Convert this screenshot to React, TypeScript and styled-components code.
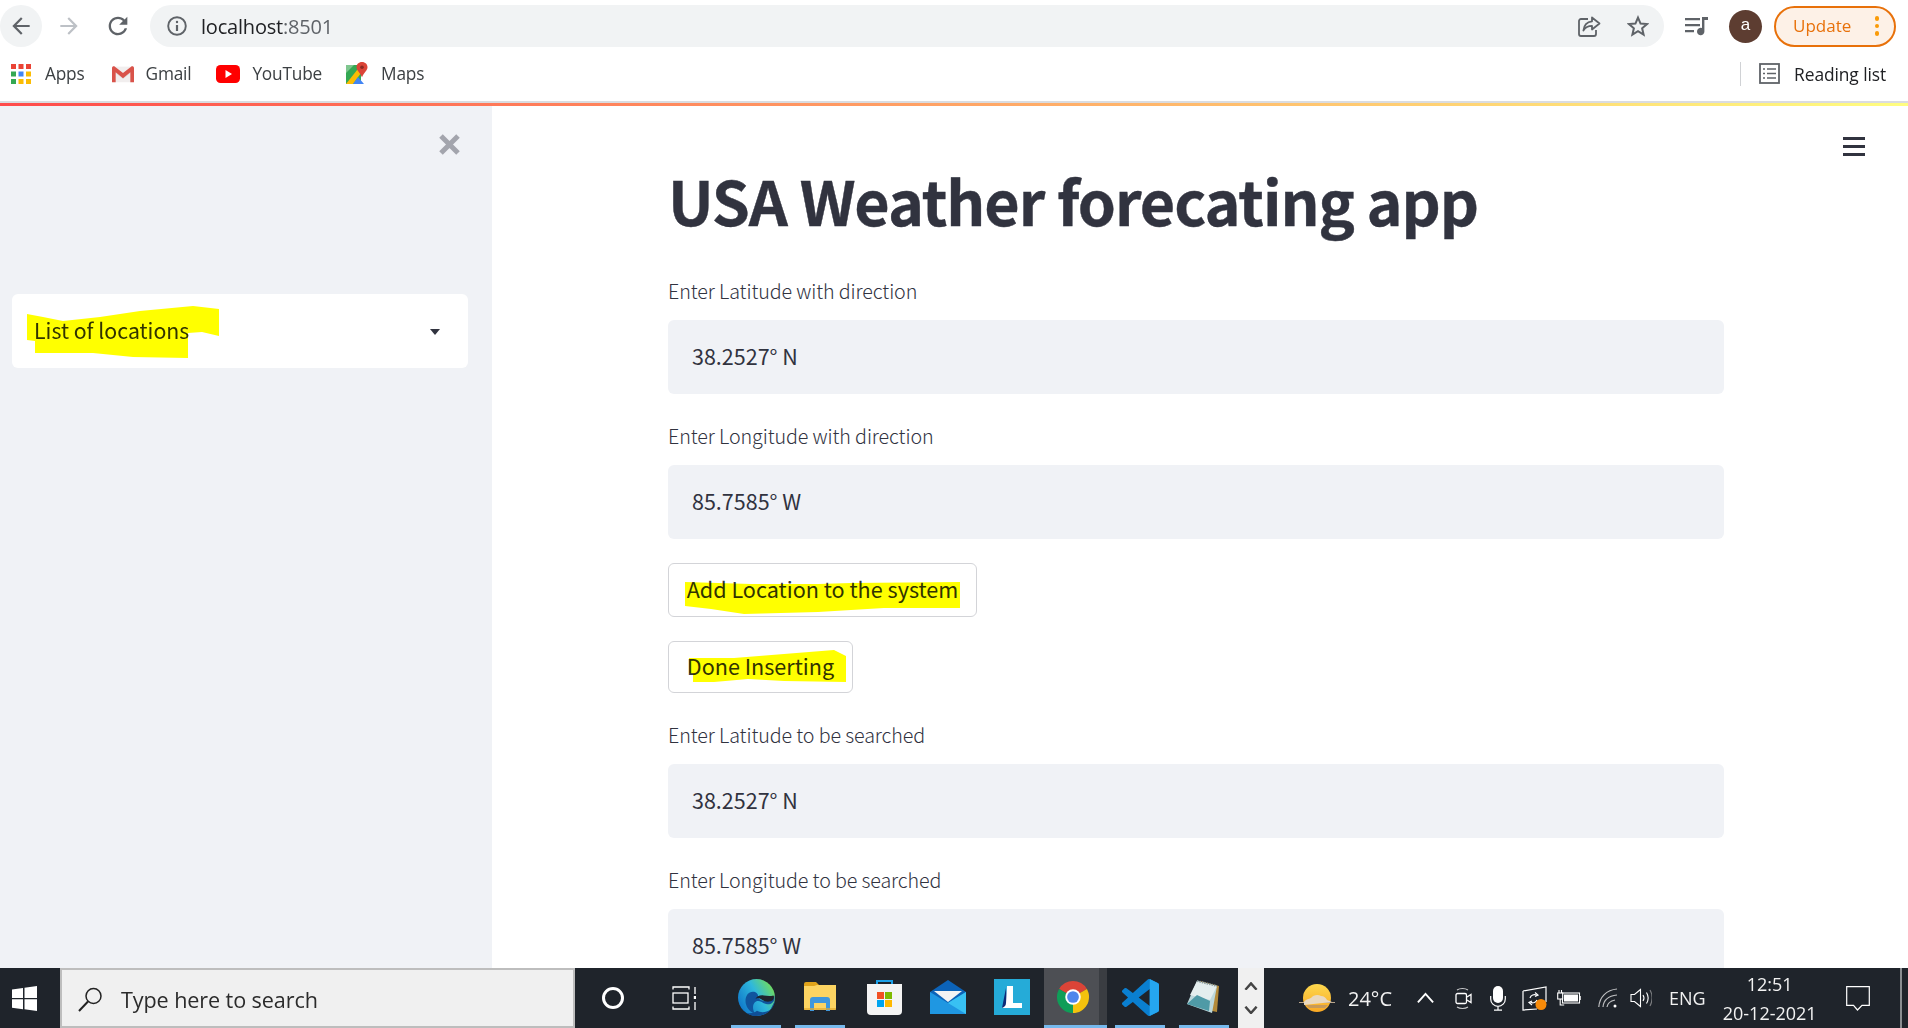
import React from 'react';
import styled, { createGlobalStyle } from 'styled-components';

const GlobalStyle = createGlobalStyle`
  html, body {
    margin: 0;
    padding: 0;
    height: 100%;
    overflow: hidden;
    background: #fff;
  }
  * {
    box-sizing: border-box;
  }
`;

const APP_FONT = `"Noto Sans CJK SC", "Source Sans Pro", "Noto Sans", sans-serif`;
const UI_FONT = `"Open Sans", "Noto Sans", sans-serif`;

const Page = styled.div`
  width: 1908px;
  height: 1028px;
  display: flex;
  flex-direction: column;
  overflow: hidden;
`;

/* browser chrome */
const Toolbar = styled.div`
  height: 52px;
  flex: none;
  display: flex;
  align-items: flex-start;
  padding-top: 5px;
  background: #fff;
`;

const NavButton = styled.div<{ $active?: boolean; $ml?: number }>`
  width: 42px;
  height: 42px;
  flex: none;
  margin-left: ${(p) => p.$ml ?? 0}px;
  display: flex;
  align-items: center;
  justify-content: center;
  border-radius: 50%;
  background: ${(p) => (p.$active ? '#f1f3f4' : 'transparent')};
`;

const AddressBar = styled.div`
  width: 1514px;
  height: 42px;
  flex: none;
  margin-left: 11px;
  padding: 0 15px 0 17px;
  display: flex;
  align-items: center;
  border-radius: 21px;
  background: #f1f3f4;
  font-family: ${UI_FONT};
  font-size: 20px;
  color: #202124;
`;

const Url = styled.span`
  margin-left: 14px;
  letter-spacing: -0.2px;
  span {
    color: #5f6368;
  }
`;

const AddressActions = styled.div`
  margin-left: auto;
  display: flex;
  align-items: center;
  gap: 26px;
`;

const ToolbarIcons = styled.div`
  display: flex;
  align-items: center;
  height: 42px;
  margin-left: 21px;
  gap: 20px;
`;

const Avatar = styled.div`
  width: 33px;
  height: 33px;
  border-radius: 50%;
  background: #5d3d31;
  color: #fff;
  font-family: "Liberation Sans", sans-serif;
  font-size: 17px;
  display: flex;
  align-items: center;
  justify-content: center;
  padding-bottom: 2px;
`;

const UpdatePill = styled.div`
  width: 122px;
  height: 41px;
  margin-left: -8px;
  padding: 0 15px 2px 17px;
  border: 2px solid #e8710a;
  border-radius: 21px;
  background: #fdf1e7;
  color: #e8710a;
  font-family: ${UI_FONT};
  font-size: 17px;
  display: flex;
  align-items: center;
  justify-content: space-between;
`;

const Dots = styled.div`
  display: flex;
  flex-direction: column;
  gap: 3px;
  margin-top: 2px;
  i {
    width: 4.5px;
    height: 4.5px;
    border-radius: 50%;
    background: #fa9b08;
  }
`;

const BookmarkBar = styled.div`
  height: 49px;
  flex: none;
  display: flex;
  align-items: center;
  padding: 0 22px 6px 11px;
  background: #fff;
  font-family: ${UI_FONT};
  font-size: 17.3px;
  color: #3c4043;
`;

const Bookmark = styled.div<{ $gap: number; $ml?: number }>`
  display: flex;
  align-items: center;
  gap: ${(p) => p.$gap}px;
  margin-left: ${(p) => p.$ml ?? 0}px;
  letter-spacing: -0.2px;
`;

const ReadingList = styled.div`
  margin-left: auto;
  display: flex;
  align-items: center;
  gap: 14px;
  height: 24px;
  padding-left: 18px;
  border-left: 1px solid #d0d2d5;
  font-size: 17.4px;
  letter-spacing: -0.1px;
  color: #202124;
`;

const Divider = styled.div`
  height: 2px;
  flex: none;
  background: #dadce0;
`;

const Decoration = styled.div`
  height: 3px;
  flex: none;
  background: linear-gradient(90deg, #ff4b4b, #fffd80);
`;

/* streamlit page */
const Body = styled.div`
  flex: 1;
  min-height: 0;
  display: flex;
  overflow: hidden;
  font-family: ${APP_FONT};
  color: #31333f;
`;

const Sidebar = styled.aside`
  width: 492px;
  flex: none;
  padding: 28px 12px 0;
  background: #f0f2f6;
`;

const CloseRow = styled.div`
  display: flex;
  justify-content: flex-end;
  height: 160px;
  padding-right: 20px;
`;

const SelectBox = styled.div`
  position: relative;
  width: 456px;
  height: 74px;
  padding: 0 22px 0;
  display: flex;
  align-items: center;
  justify-content: space-between;
  border-radius: 6px;
  background: #fff;
  font-size: 21.3px;
`;

const SelectText = styled.span`
  margin-bottom: 4px;
`;

const Caret = styled.div`
  width: 0;
  height: 0;
  border-left: 5.5px solid transparent;
  border-right: 5.5px solid transparent;
  border-top: 6px solid #31333f;
  margin-right: 6px;
  margin-top: 2px;
`;

const Marker = styled.svg`
  position: absolute;
  inset: 0;
  width: 100%;
  height: 100%;
  overflow: visible;
  mix-blend-mode: multiply;
  pointer-events: none;
`;

const Main = styled.main`
  position: relative;
  flex: 1;
  padding: 0 184px 0 176px;
  display: flex;
  flex-direction: column;
  align-items: flex-start;
  gap: 24px;
  background: #fff;
`;

const MenuButton = styled.div`
  position: absolute;
  top: 31px;
  right: 43px;
  width: 22px;
  height: 19px;
  border-top: 3px solid #31333f;
  border-bottom: 3px solid #31333f;
  &::after {
    content: '';
    display: block;
    height: 3px;
    margin-top: 5px;
    background: #31333f;
  }
`;

const Title = styled.h1`
  flex: none;
  margin: 0;
  height: 143px;
  padding-top: 63px;
  font-size: 61px;
  line-height: 1;
  font-weight: 700;
  letter-spacing: -1.07px;
  -webkit-text-stroke: 0.4px #31333f;
  white-space: nowrap;
`;

const Field = styled.div`
  width: 100%;
  flex: none;
`;

const Label = styled.div`
  height: 36px;
  margin-bottom: 11px;
  line-height: 36px;
  font-size: 19.7px;
  font-weight: 300;
  letter-spacing: -0.1px;
`;

const InputBox = styled.div`
  height: 74px;
  padding: 0 24px 4px;
  display: flex;
  align-items: center;
  border-radius: 6px;
  background: #f0f2f6;
  font-size: 21.5px;
`;

const Button = styled.div<{ $w: number; $h: number }>`
  position: relative;
  flex: none;
  width: ${(p) => p.$w}px;
  height: ${(p) => p.$h}px;
  padding-bottom: 3px;
  display: flex;
  align-items: center;
  justify-content: center;
  border: 1px solid #d3d4d8;
  border-radius: 6px;
  background: #fff;
  font-size: 21.6px;
  white-space: nowrap;
`;

/* windows taskbar */
const Taskbar = styled.footer`
  height: 60px;
  flex: none;
  display: flex;
  align-items: stretch;
  background: #1f242b;
  font-family: ${UI_FONT};
  color: #f2f2f2;
`;

const StartButton = styled.div`
  width: 60px;
  flex: none;
  display: flex;
  align-items: center;
  justify-content: center;
  padding-right: 12px;
`;

const SearchBox = styled.div`
  width: 515px;
  flex: none;
  padding: 2px 0 0 16px;
  display: flex;
  align-items: center;
  gap: 18px;
  background: #f0f0f0;
  border: 2px solid #bdbdbd;
  color: #2b2b2b;
  font-size: 21.6px;
  letter-spacing: -0.1px;
`;

const Cortana = styled.div`
  width: 75px;
  flex: none;
  display: flex;
  align-items: center;
  justify-content: center;
`;

const TaskView = styled.div`
  width: 74px;
  flex: none;
  padding-left: 22px;
  display: flex;
  align-items: center;
`;

const AppButton = styled.div<{ $open?: boolean; $active?: boolean }>`
  position: relative;
  width: 64px;
  flex: none;
  display: flex;
  align-items: center;
  justify-content: center;
  padding-bottom: 2px;
  background: ${(p) =>
    p.$active ? 'linear-gradient(90deg, #4d4f54 0 55px, #3a3d42 55px, #3a3d42 63px, #1f242b 63px)' : 'transparent'};
  ${(p) => p.$active && 'padding-right: 6px;'}
  &::after {
    content: '';
    display: ${(p) => (p.$open ? 'block' : 'none')};
    position: absolute;
    left: ${(p) => (p.$active ? 0 : 7)}px;
    right: ${(p) => (p.$active ? 1 : 7)}px;
    bottom: 0;
    height: 3px;
    background: #76b9ed;
  }
`;

const ScrollStrip = styled.div`
  width: 26px;
  flex: none;
  margin-left: 2px;
  display: flex;
  flex-direction: column;
  align-items: center;
  justify-content: space-around;
  padding: 6px 0;
  background: #f0f0f0;
`;

const Tray = styled.div`
  flex: 1;
  display: flex;
  align-items: center;
  padding-left: 35px;
`;

const TrayItem = styled.div<{ $ml: number; $size?: number }>`
  flex: none;
  display: flex;
  align-items: center;
  margin-left: ${(p) => p.$ml}px;
  font-size: ${(p) => p.$size ?? 19}px;
`;

const Clock = styled.div`
  width: 94px;
  margin-left: 17px;
  flex: none;
  display: flex;
  flex-direction: column;
  align-items: center;
  gap: 5px;
  font-size: 18px;
  line-height: 24px;
`;

const EdgeLine = styled.div`
  width: 2px;
  height: 100%;
  margin-left: 30px;
  background: #8a8d91;
`;

const Highlight = ({ points }: { points: string }) => (
  <Marker>
    <polygon points={points} fill="#ffff00" />
  </Marker>
);

const BackIcon = ({ color }: { color: string }) => (
  <svg width="26" height="26" viewBox="0 0 24 24" fill={color}>
    <path d="M20 11H7.83l5.59-5.59L12 4l-8 8 8 8 1.41-1.41L7.83 13H20v-2z" />
  </svg>
);

const ForwardIcon = () => (
  <svg width="26" height="26" viewBox="0 0 24 24" fill="#bdc1c6">
    <path d="M12 4l-1.41 1.41L16.17 11H4v2h12.17l-5.58 5.59L12 20l8-8z" />
  </svg>
);

const ReloadIcon = () => (
  <svg width="28" height="28" viewBox="0 0 24 24" fill="#5f6368">
    <path d="M17.65 6.35C16.2 4.9 14.21 4 12 4c-4.42 0-7.99 3.58-7.99 8s3.57 8 7.99 8c3.73 0 6.84-2.55 7.73-6h-2.08c-.82 2.33-3.04 4-5.65 4-3.31 0-6-2.69-6-6s2.69-6 6-6c1.66 0 3.14.69 4.22 1.78L13 11h7V4l-2.35 2.35z" />
  </svg>
);

const InfoIcon = () => (
  <svg width="20" height="20" viewBox="0 0 20 20" fill="none" stroke="#5f6368" strokeWidth="1.9">
    <circle cx="10" cy="10" r="8.8" />
    <path d="M10 9v6" strokeWidth="2.2" />
    <circle cx="10" cy="6" r="0.6" strokeWidth="1.2" />
  </svg>
);

const ShareIcon = () => (
  <svg width="23" height="21" viewBox="0 0 23 21" fill="none" stroke="#5f6368" strokeWidth="1.8">
    <path d="M10 3H3a2 2 0 0 0-2 2v13a2 2 0 0 0 2 2h13a2 2 0 0 0 2-2v-4" />
    <path d="M14 1.5l7.5 6-7.5 6v-3.6c-4 0-6.6 1.4-8.6 4.6.5-5 3.3-8.6 8.6-9.2z" strokeLinejoin="round" />
  </svg>
);

const StarIcon = () => (
  <svg width="22" height="22" viewBox="0 0 24 24" fill="none" stroke="#5f6368" strokeWidth="2.2" strokeLinejoin="miter">
    <path d="M12 2.8l2.8 6.5 7 .6-5.3 4.6 1.6 6.9-6.1-3.7-6.1 3.7 1.6-6.9L2.2 9.9l7-.6z" />
  </svg>
);

const QueueIcon = () => (
  <svg width="24" height="20" viewBox="0 0 24 20" fill="#5f6368">
    <path d="M0 2h15v2.2H0zM0 8h15v2.2H0zM0 14h9v2.2H0z" />
    <path d="M17 1h6v3h-3.6v11.5a3.7 3.7 0 1 1-2.4-3.4z" />
  </svg>
);

const AppsIcon = () => (
  <svg width="20" height="20" viewBox="0 0 20 20">
    {[
      ['#ea4335', '#ea4335', '#ea4335'],
      ['#34a853', '#4285f4', '#fbbc04'],
      ['#34a853', '#fbbc04', '#fbbc04'],
    ].map((row, r) =>
      row.map((c, i) => <rect key={`${r}-${i}`} x={i * 7.5} y={r * 7.5} width="5" height="5" fill={c} />)
    )}
  </svg>
);

const GmailIcon = () => (
  <svg width="22" height="18" viewBox="0 0 24 18">
    <path d="M1 1h22v17H1z" fill="#f1eeee" />
    <path d="M1 1l11 9 11-9v5l-11 8.500L1 6z" fill="#e0e0e0" />
    <path d="M0 2.500C0 .5 2 0 3.200 1L12 8l8.800-7C22 0 24 .5 24 2.500V18h-4V7l-8 6.500L4 7v11H0z" fill="#d9534a" />
  </svg>
);

const YouTubeIcon = () => (
  <svg width="24" height="18" viewBox="0 0 24 18">
    <rect width="24" height="18" rx="4.500" fill="#ff0000" />
    <path d="M9.500 5l6.500 4-6.500 4z" fill="#fff" />
  </svg>
);

const MapsIcon = () => (
  <svg width="22" height="23" viewBox="0 0 22 23">
    <path d="M0 3h15v19H0z" fill="#34a853" />
    <path d="M0 22L15 3v8L7 22z" fill="#fbbc04" />
    <path d="M7 22l5-7 6 7z" fill="#4285f4" />
    <path d="M0 3h8L0 11z" fill="#7fc68f" />
    <path d="M16 0c3.300 0 5.500 2.400 5.500 5.200 0 3.300-3.800 5.500-5.500 10-1.700-4.500-5.500-6.700-5.500-10C10.500 2.400 12.700 0 16 0z" fill="#db4437" />
    <circle cx="16" cy="5.200" r="1.800" fill="#8c2a22" />
  </svg>
);

const ReadingIcon = () => (
  <svg width="21" height="21" viewBox="0 0 21 21" fill="none" stroke="#5f6368">
    <rect x="1" y="1" width="19" height="19" strokeWidth="1.800" />
    <path d="M8 6h9M8 10.500h9M8 15h9" strokeWidth="1.600" />
    <path d="M4 6h2M4 10.500h2M4 15h2" strokeWidth="1.600" />
  </svg>
);

const CloseIcon = () => (
  <svg width="21" height="21" viewBox="0 0 21 21" stroke="#a3a5ad" strokeWidth="5">
    <path d="M2 2l17 17M19 2L2 19" />
  </svg>
);

const WindowsIcon = () => (
  <svg width="25" height="25" viewBox="0 0 25 25" fill="#fff">
    <path d="M0 3.500l11-1.500v10H0zM12.500 1.800L25 0v12H12.500zM0 13.200h11v10L0 21.700zM12.500 13.200H25V25l-12.500-1.800z" />
  </svg>
);

const MagnifierIcon = () => (
  <svg width="25" height="25" viewBox="0 0 25 25" fill="none" stroke="#222" strokeWidth="1.500">
    <circle cx="15.500" cy="9" r="7.500" />
    <path d="M10 14.500L1 24" strokeWidth="2" />
  </svg>
);

const CortanaIcon = () => (
  <svg width="24" height="24" viewBox="0 0 24 24" fill="none" stroke="#fff" strokeWidth="3">
    <circle cx="12" cy="12" r="9.500" />
  </svg>
);

const TaskViewIcon = () => (
  <svg width="24" height="24" viewBox="0 0 24 24" fill="none" stroke="#fff" strokeWidth="1.300">
    <path d="M1 3.500V1h16v2.500M1 20.500V23h16v-2.500" />
    <rect x="1" y="7" width="15" height="10" />
    <path d="M23 1v7M23 16v8" />
    <rect x="21.800" y="10" width="2.400" height="3" fill="#fff" stroke="none" />
  </svg>
);

const EdgeIcon = () => (
  <svg width="37" height="37" viewBox="0 0 36 36">
    <defs>
      <linearGradient id="edgeG" x1="0" y1="0.800" x2="1" y2="0.200">
        <stop offset="0" stopColor="#0c72c9" />
        <stop offset="0.550" stopColor="#2fb8dc" />
        <stop offset="1" stopColor="#78e04f" />
      </linearGradient>
    </defs>
    <circle cx="18" cy="18" r="18" fill="url(#edgeG)" />
    <path d="M36 21c-1 8-8 15-18 15-4 0-7-1-9.500-3 3 1 8 0 10-2 3 2 9 2 13-1z" fill="#0f4f97" />
    <path d="M35.500 15c0 3-3 6.500-8 6.500-5 0-8-2-8-5 0-2-2-4-5-4-5 0-8 5-7 11 1 5 5 9 9 10-4-6-1-12 3-12 4 0 6 4 11 3 3-.5 5-3 5-6z" fill="#10559e" />
    <path d="M34 20.500c-3 2.500-8 2-11-.5-2-1.500-4-2-6-.5 1-2.500 4-4 8-3.500 3 .4 6 1 9.500 0 1 1 .5 3-.5 4.500z" fill="#1f242b" />
  </svg>
);

const FolderIcon = () => (
  <svg width="32" height="30" viewBox="0 0 32 30">
    <path d="M0 2a2 2 0 0 1 2-2h10l4 4H0z" fill="#e0a31a" />
    <path d="M0 4l10 0 3-1 19 0v24a1 1 0 0 1-1 1H1a1 1 0 0 1-1-1z" fill="#fcd462" />
    <path d="M6 29V18a3 3 0 0 1 3-3h14a3 3 0 0 1 3 3v11h-4v-8H10v8z" fill="#3f97dc" />
    <path d="M0 26h32v1a1 1 0 0 1-1 1H1a1 1 0 0 1-1-1z" fill="#e2ab30" opacity="0.700" />
  </svg>
);

const StoreIcon = () => (
  <svg width="35" height="36" viewBox="0 0 35 36">
    <path d="M10 6V2h15v4" fill="none" stroke="#1da1e8" strokeWidth="2" />
    <path d="M0 5h35v27a4 4 0 0 1-4 4H4a4 4 0 0 1-4-4z" fill="#f4f4f4" />
    <rect x="10" y="13" width="7" height="7" fill="#f25022" />
    <rect x="18" y="13" width="7" height="7" fill="#7fba00" />
    <rect x="10" y="21" width="7" height="7" fill="#00a4ef" />
    <rect x="18" y="21" width="7" height="7" fill="#ffb900" />
  </svg>
);

const MailIcon = () => (
  <svg width="36" height="34" viewBox="0 0 36 34">
    <path d="M0 12L18 0l18 12v22H0z" fill="#0c63b8" />
    <path d="M4 11h28L18 22z" fill="#f3f3f3" />
    <path d="M0 12l18 11 18-11v22H0z" fill="#1f97e2" />
    <path d="M18 23l18-11v22z" fill="#38c1f3" />
  </svg>
);

const LogoL = () => (
  <svg width="36" height="36" viewBox="0 0 36 36">
    <rect width="36" height="36" fill="#25abd8" />
    <path d="M12 9L8 29h6z" fill="#0d2a78" />
    <path d="M13 7h6v17h9v5H8c2-1 4-2 4-5z" fill="#fff" />
  </svg>
);

const ChromeIcon = () => (
  <svg width="34" height="34" viewBox="0 0 36 36">
    <path d="M18 18L3.300 9.500A17 17 0 0 1 32.700 9.500z" fill="#db4437" />
    <path d="M18 18L32.700 9.500A17 17 0 0 1 18 35z" fill="#f4c20d" />
    <path d="M18 18L18 35A17 17 0 0 1 3.300 9.500z" fill="#0f9d58" />
    <circle cx="18" cy="18" r="8.200" fill="#fff" />
    <circle cx="18" cy="18" r="6.200" fill="#4f86ec" />
  </svg>
);

const VSCodeIcon = () => (
  <svg width="37" height="37" viewBox="0 0 24 24">
    <path d="M23.150 2.587L18.210.21a1.494 1.494 0 0 0-1.705.29l-9.460 8.630-4.120-3.128a.999.999 0 0 0-1.276.057L.327 7.261A1 1 0 0 0 .326 8.740L3.899 12 .326 15.260a1 1 0 0 0 .001 1.479L1.650 17.940a.999.999 0 0 0 1.276.057l4.120-3.128 9.460 8.630a1.492 1.492 0 0 0 1.704.29l4.942-2.377A1.500 1.500 0 0 0 24 20.060V3.939a1.500 1.500 0 0 0-.850-1.352zm-5.146 14.861L10.826 12l7.178-5.448v10.896z" fill="#0a7fd0" />
    <path d="M18 .1c.1 0 .2.100.3.100l4.850 2.390A1.500 1.500 0 0 1 24 3.940v16.120a1.500 1.500 0 0 1-.850 1.350l-4.940 2.380c-.1 0-.2.100-.3.100z" fill="#25a6f0" />
  </svg>
);

const NotepadIcon = () => (
  <svg width="34" height="34" viewBox="0 0 34 34">
    <path d="M13 1l19 5-2 26-5-1z" fill="#b38a3a" />
    <path d="M10 1l20 5-5 27L0 24z" fill="#bcd8dc" />
    <path d="M10 1l20 5-7 14L3 15z" fill="#e4eeee" />
    <path d="M0 24l10-9 13 6-1 10z" fill="#4f9aa6" />
    <path d="M10 1l20 5" stroke="#8a9a9c" strokeWidth="2" strokeDasharray="1.500 1" />
  </svg>
);

const ChevronIcon = ({ up, color, size }: { up?: boolean; color: string; size: number }) => (
  <svg width={size} height={size * 0.6} viewBox="0 0 20 12" fill="none" stroke={color} strokeWidth={up === undefined ? 2 : 3.500}>
    <path d={up === false ? 'M2 1l8 9 8-9' : 'M2 11l8-9 8 9'} />
  </svg>
);

const WeatherIcon = () => (
  <svg width="36" height="36" viewBox="0 0 36 36">
    <defs>
      <linearGradient id="sunG" x1="0" y1="0" x2="0" y2="1">
        <stop offset="0" stopColor="#fdd84e" />
        <stop offset="1" stopColor="#f9a824" />
      </linearGradient>
    </defs>
    <circle cx="18" cy="18" r="14" fill="url(#sunG)" />
    <path d="M0 22h36v1H0z" fill="#b9a58c" />
    <path d="M5 22c2-3 5-3 7-4 2-3 7-4 10-2 3 0 5 2 6 4l5 2-28 3z" fill="#ead9c0" />
    <path d="M7 25h22l-3 3H10z" fill="#c79a5a" />
  </svg>
);

const MeetIcon = () => (
  <svg width="17" height="23" viewBox="0 0 17 23" fill="none" stroke="#fff" strokeWidth="1.100">
    <path d="M2 3c3-2 8-2 11 0M2 20c3 2 8 2 11 0" stroke="#c9cacc" />
    <rect x="1" y="6.500" width="10.500" height="10" rx="1.500" strokeWidth="1.300" />
    <path d="M12 10l4-2.500v8L12 13" strokeWidth="1.300" />
  </svg>
);

const MicIcon = () => (
  <svg width="16" height="25" viewBox="0 0 16 25" fill="none" stroke="#fff" strokeWidth="1.200">
    <rect x="3" y="0" width="10" height="17" rx="5" fill="#fff" stroke="none" />
    <path d="M.7 10v3a7.300 7.300 0 0 0 14.600 0v-3M8 20v4M4 24.200h8" />
  </svg>
);

const SyncIcon = () => (
  <svg width="25" height="25" viewBox="0 0 25 25" fill="none" stroke="#fff" strokeWidth="1.200">
    <path d="M1 5l23-4v15M1 5v19l14-1" />
    <path d="M8 12c.8-3 4-4 7-2.800M15 14c-.8 2.500-4 3.500-6.500 2.300" />
    <path d="M13 6.500l3 2.500-3 1.500M10 19l-3-2.500 3-1.500" />
    <circle cx="19" cy="18.500" r="5.500" fill="#f78a09" stroke="none" />
  </svg>
);

const BatteryIcon = () => (
  <svg width="24" height="20" viewBox="0 0 24 20" fill="none" stroke="#fff" strokeWidth="1.100">
    <rect x="5.500" y="5" width="17" height="10" />
    <rect x="7" y="6.500" width="14" height="7" fill="#fff" stroke="none" />
    <path d="M23 8v4" strokeWidth="1.500" />
    <rect x="0.700" y="5" width="5" height="6" fill="#1f242b" />
    <path d="M2 5V2M4.500 5V2M3.200 11v6h4" />
  </svg>
);

const WifiIcon = () => (
  <svg width="20" height="20" viewBox="0 0 20 20" fill="none" stroke="#bfc0c2" strokeWidth="1.200">
    <path d="M.8 19C1.500 9 8.500 2 19 1M5 19c.5-6.500 5-11 14-12M9 19c.5-3.500 3-6 8-7" />
    <circle cx="17" cy="18" r="1.500" fill="#fff" stroke="none" />
  </svg>
);

const SpeakerIcon = () => (
  <svg width="22" height="20" viewBox="0 0 22 20" fill="none" stroke="#fff" strokeWidth="1.100">
    <path d="M1 6.500h3.500L10.500 1.500v17L4.500 13.500H1z" />
    <path d="M13 7c1.200 1.800 1.200 4.200 0 6" />
    <path d="M16.500 4.500c2 3.300 2 7.700 0 11" />
    <path d="M20 2c3 4.800 2.500 11.500 0 16" stroke="#7c7e81" />
  </svg>
);

const NotificationIcon = () => (
  <svg width="24" height="25" viewBox="0 0 24 25" fill="none" stroke="#fff" strokeWidth="1.200">
    <path d="M.7.700h22.600v18.600H16L11.500 24 7.500 19.300H.7z" />
  </svg>
);

export default function App() {
  return (
    <Page>
      <GlobalStyle />
      <Toolbar>
        <NavButton $active>
          <BackIcon color="#5f6368" />
        </NavButton>
        <NavButton $ml={6}>
          <ForwardIcon />
        </NavButton>
        <NavButton $ml={7}>
          <ReloadIcon />
        </NavButton>
        <AddressBar>
          <InfoIcon />
          <Url>
            localhost<span>:8501</span>
          </Url>
          <AddressActions>
            <ShareIcon />
            <StarIcon />
          </AddressActions>
        </AddressBar>
        <ToolbarIcons>
          <QueueIcon />
          <Avatar>a</Avatar>
          <UpdatePill>
            Update
            <Dots>
              <i />
              <i />
              <i />
            </Dots>
          </UpdatePill>
        </ToolbarIcons>
      </Toolbar>
      <BookmarkBar>
        <Bookmark $gap={14}>
          <AppsIcon />
          Apps
        </Bookmark>
        <Bookmark $gap={12} $ml={27}>
          <GmailIcon />
          Gmail
        </Bookmark>
        <Bookmark $gap={12} $ml={25}>
          <YouTubeIcon />
          YouTube
        </Bookmark>
        <Bookmark $gap={13} $ml={24}>
          <MapsIcon />
          Maps
        </Bookmark>
        <ReadingList>
          <ReadingIcon />
          Reading list
        </ReadingList>
      </BookmarkBar>
      <Divider />
      <Decoration />
      <Body>
        <Sidebar>
          <CloseRow>
            <CloseIcon />
          </CloseRow>
          <SelectBox>
            <Highlight points="15,20 31,23 51,27 88,23 128,17 181,12 207,15 207,42 190,38 176,39 176,64 121,63 81,59 23,59 23,47 15,46" />
            <SelectText>List of locations</SelectText>
            <Caret />
          </SelectBox>
        </Sidebar>
        <Main>
          <MenuButton />
          <Title>USA Weather forecating app</Title>
          <Field>
            <Label>Enter Latitude with direction</Label>
            <InputBox>38.2527° N</InputBox>
          </Field>
          <Field>
            <Label>Enter Longitude with direction</Label>
            <InputBox>85.7585° W</InputBox>
          </Field>
          <Button $w={309} $h={54}>
            <Highlight points="16,18 82,20 149,20 182,19 291,18 291,44 215,44 149,48 75,50 42,45 16,42" />
            Add Location to the system
          </Button>
          <Button $w={185} $h={52}>
            <Highlight points="20,16 65,16 115,12 165,8 177,14 177,40 115,39 79,37 45,40 24,40 24,32 20,31" />
            Done Inserting
          </Button>
          <Field>
            <Label>Enter Latitude to be searched</Label>
            <InputBox>38.2527° N</InputBox>
          </Field>
          <Field>
            <Label>Enter Longitude to be searched</Label>
            <InputBox>85.7585° W</InputBox>
          </Field>
        </Main>
      </Body>
      <Taskbar>
        <StartButton>
          <WindowsIcon />
        </StartButton>
        <SearchBox>
          <MagnifierIcon />
          Type here to search
        </SearchBox>
        <Cortana>
          <CortanaIcon />
        </Cortana>
        <TaskView>
          <TaskViewIcon />
        </TaskView>
        <AppButton $open>
          <EdgeIcon />
        </AppButton>
        <AppButton $open>
          <FolderIcon />
        </AppButton>
        <AppButton>
          <StoreIcon />
        </AppButton>
        <AppButton>
          <MailIcon />
        </AppButton>
        <AppButton>
          <LogoL />
        </AppButton>
        <AppButton $open $active>
          <ChromeIcon />
        </AppButton>
        <AppButton $open>
          <VSCodeIcon />
        </AppButton>
        <AppButton $open>
          <NotepadIcon />
        </AppButton>
        <ScrollStrip>
          <ChevronIcon up color="#444" size={14} />
          <ChevronIcon up={false} color="#444" size={14} />
        </ScrollStrip>
        <Tray>
          <TrayItem $ml={0}>
            <WeatherIcon />
          </TrayItem>
          <TrayItem $ml={13} $size={20}>
            24°C
          </TrayItem>
          <TrayItem $ml={24}>
            <ChevronIcon color="#fff" size={19} />
          </TrayItem>
          <TrayItem $ml={20}>
            <MeetIcon />
          </TrayItem>
          <TrayItem $ml={18}>
            <MicIcon />
          </TrayItem>
          <TrayItem $ml={16}>
            <SyncIcon />
          </TrayItem>
          <TrayItem $ml={10}>
            <BatteryIcon />
          </TrayItem>
          <TrayItem $ml={17}>
            <WifiIcon />
          </TrayItem>
          <TrayItem $ml={12}>
            <SpeakerIcon />
          </TrayItem>
          <TrayItem $ml={17} $size={18}>
            ENG
          </TrayItem>
          <Clock>
            <span>12:51</span>
            <span>20-12-2021</span>
          </Clock>
          <TrayItem $ml={29}>
            <NotificationIcon />
          </TrayItem>
          <EdgeLine />
        </Tray>
      </Taskbar>
    </Page>
  );
}
